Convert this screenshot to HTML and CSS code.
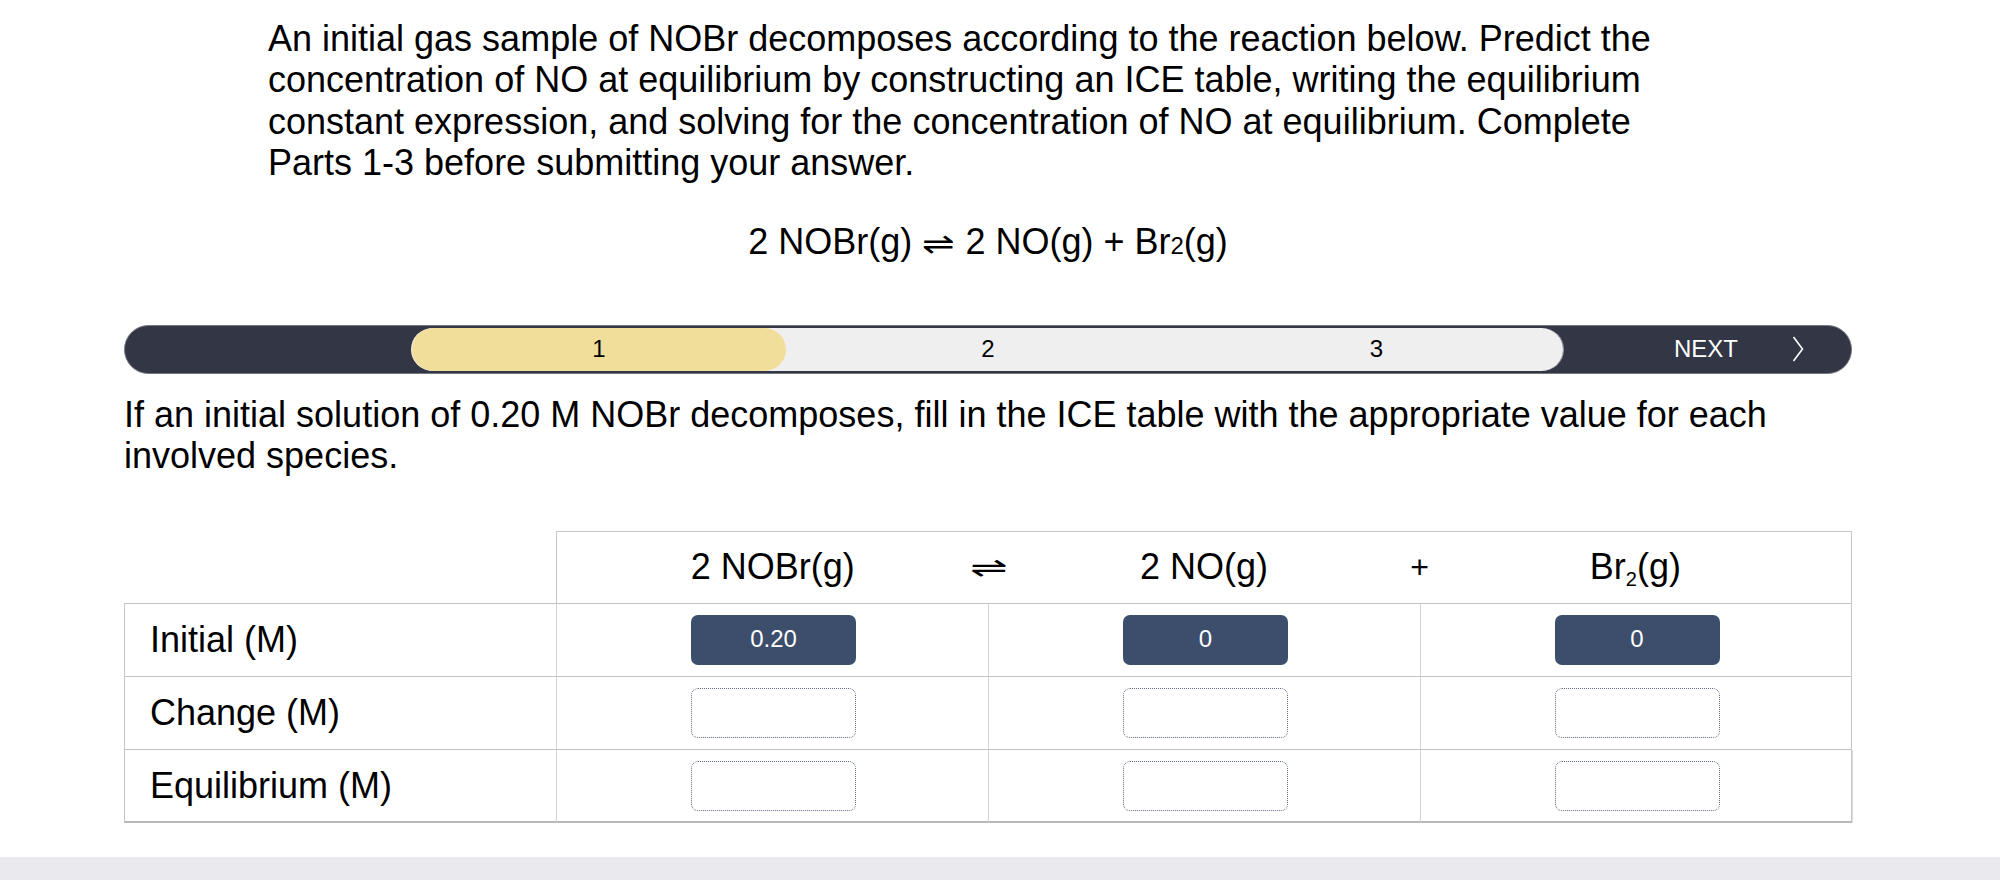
FILE: index.html
```html
<!DOCTYPE html>
<html lang="en">
<head>
<meta charset="utf-8">
<title>ICE table</title>
<link rel="stylesheet" href="styles.css">
</head>
<body>
<div class="page">
  <p class="intro">An initial gas sample of NOBr decomposes according to the reaction below. Predict the concentration of NO at equilibrium by constructing an ICE table, writing the equilibrium constant expression, and solving for the concentration of NO at equilibrium. Complete Parts 1-3 before submitting your answer.</p>
  <p class="equation">2 NOBr(g) <span class="arrow">&#8652;</span> 2 NO(g) + Br<span class="small2">2</span>(g)</p>

  <div class="stepper">
    <div class="stepper-lead"></div>
    <div class="steps">
      <div class="step step-active">1</div>
      <div class="step">2</div>
      <div class="step">3</div>
    </div>
    <div class="next">
      <span class="next-label">NEXT</span>
      <svg class="chevron" width="12" height="26" viewBox="0 0 12 26"><polyline points="1.5,1 10.5,13 1.5,25" fill="none" stroke="#ffffff" stroke-width="1.6"/></svg>
    </div>
  </div>

  <p class="prompt">If an initial solution of 0.20 M NOBr decomposes, fill in the ICE table with the appropriate value for each involved species.</p>

  <div class="ice">
    <div class="ice-corner"></div>
    <div class="ice-head">
      <div class="species">2 NOBr(g)</div>
      <div class="sym"><span class="sym-arrow">&#8652;</span></div>
      <div class="species">2 NO(g)</div>
      <div class="sym">+</div>
      <div class="species">Br<sub class="sub2">2</sub>(g)</div>
    </div>

    <div class="label">Initial (M)</div>
    <div class="cell"><div class="box box-filled">0.20</div></div>
    <div class="cell"><div class="box box-filled">0</div></div>
    <div class="cell cell-last"><div class="box box-filled">0</div></div>

    <div class="label">Change (M)</div>
    <div class="cell"><div class="box box-empty"></div></div>
    <div class="cell"><div class="box box-empty"></div></div>
    <div class="cell cell-last"><div class="box box-empty"></div></div>

    <div class="label label-bottom">Equilibrium (M)</div>
    <div class="cell cell-bottom"><div class="box box-empty"></div></div>
    <div class="cell cell-bottom"><div class="box box-empty"></div></div>
    <div class="cell cell-last cell-bottom"><div class="box box-empty"></div></div>
  </div>
</div>
<div class="band"></div>
</body>
</html>
```

FILE: styles.css
```css
html, body {
  margin: 0;
  padding: 0;
  background: #ffffff;
}
body {
  font-family: "Liberation Sans", Arial, Helvetica, sans-serif;
  color: #000000;
  overflow: hidden;
}
.page {
  width: 1728px;
  margin-left: 124px;
  padding-top: 18px;
}
.intro {
  margin: 0 0 0 144px;
  width: 1440px;
  font-size: 36px;
  line-height: 41.4px;
}
.equation {
  margin: 37px 0 0 0;
  font-size: 36px;
  line-height: 42px;
  text-align: center;
}
.arrow {
  display: inline-block;
  font-family: "DejaVu Sans", sans-serif;
  font-size: 30px;
  line-height: 30px;
  transform: scaleX(1.3);
  margin: 0 4px;
}
.small2 {
  font-size: 24px;
}

/* stepper */
.stepper {
  margin-top: 58px;
  height: 49px;
  box-sizing: border-box;
  display: flex;
  padding: 2px 0;
  background: #323645;
  border: 1px solid #74777f;
  border-radius: 25px;
}
.stepper-lead {
  width: 287px;
}
.steps {
  width: 1151px;
  display: grid;
  grid-template-columns: 374px 404px 1fr;
  background: linear-gradient(to right, transparent 0, transparent 187px, #efefef 187px);
  border-radius: 0 22px 22px 0;
  box-shadow: 1px 0 0 #9a9ca3;
}
.step {
  display: flex;
  align-items: center;
  justify-content: center;
  font-size: 24px;
  color: #000000;
}
.step-active {
  background: #f2de9b;
  border-radius: 22px;
  box-shadow: -1px 0 0 #f7f3e6;
}
.next {
  flex: 1;
  display: flex;
  align-items: center;
  padding-left: 111px;
}
.next-label {
  font-size: 24px;
  color: #ffffff;
  width: 64px;
}
.chevron {
  margin-left: 54px;
  display: block;
}

.prompt {
  margin: 20px 0 0 0;
  font-size: 36px;
  line-height: 41.4px;
}

/* ICE table */
.ice {
  margin-top: 55px;
  display: grid;
  grid-template-columns: 432px 432px 432px 432px;
  grid-template-rows: 73px 73px 73px 73px;
}
.ice-corner {
  border-bottom: 1px solid #c2c2c2;
}
.ice-head {
  grid-column: 2 / span 3;
  display: grid;
  grid-template-columns: 1fr 0 1fr 0 1fr;
  align-items: center;
  border: 1px solid #c6c6c6;
  border-bottom: 1px solid #c2c2c2;
  font-size: 36px;
}
.species {
  text-align: center;
  padding-bottom: 2px;
}
.sym {
  display: flex;
  justify-content: center;
  white-space: nowrap;
  font-size: 32px;
}
.sym-arrow {
  display: inline-block;
  font-family: "DejaVu Sans", sans-serif;
  font-size: 28px;
  transform: scaleX(1.6);
}
.sub2 {
  font-size: 20px;
  vertical-align: -7px;
  line-height: 0;
}
.label {
  display: flex;
  align-items: center;
  padding-left: 25px;
  font-size: 36px;
  border-left: 1px solid #c6c6c6;
  border-bottom: 1px solid #c2c2c2;
}
.cell {
  display: flex;
  align-items: center;
  justify-content: center;
  border-left: 1px solid #d2d2d2;
  border-bottom: 1px solid #c2c2c2;
}
.cell-last {
  border-right: 1px solid #c6c6c6;
}
.label-bottom,
.cell-bottom {
  border-bottom: 2px solid #b9b9b9;
}
.cell-last.cell-bottom {
  box-shadow: 1px 0 0 #dcdcdc;
}
.box {
  width: 165px;
  height: 50px;
  box-sizing: border-box;
  border-radius: 7px;
  display: flex;
  align-items: center;
  justify-content: center;
  font-size: 24px;
  margin-left: 2px;
}
.box-filled {
  background: #3c4e6c;
  color: #ffffff;
  padding-bottom: 2px;
}
.box-empty {
  background: #ffffff;
  border: 1px dotted #5f6a88;
}
.band {
  margin-top: 34px;
  height: 40px;
  background: #e9e9ee;
}
```
